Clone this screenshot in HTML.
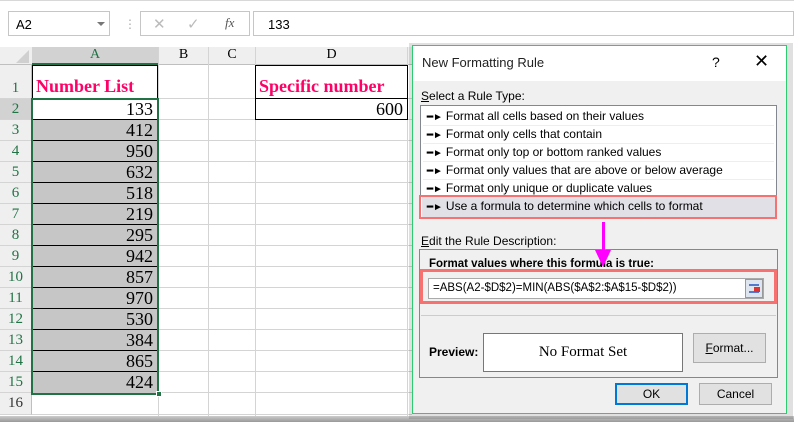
<!DOCTYPE html>
<html><head><meta charset="utf-8"><style>
*{box-sizing:border-box;margin:0;padding:0}
body{width:794px;height:422px;overflow:hidden;background:#fff;position:relative;font-family:"Liberation Serif",serif}
.a{position:absolute}
.ui{font-family:"Liberation Sans",sans-serif}
.rh{position:absolute;left:0;width:32px;background:#efefef;color:#217346;font-size:15px;text-align:center;border-bottom:1px solid #d4d4d4;border-right:1px solid #bfbfbf}
.hl{position:absolute;height:1px;background:#d4d4d4;left:32px;width:380px}
.vl{position:absolute;width:1px;background:#d4d4d4;top:65px;height:352px}
.cell{position:absolute;left:33px;width:124px;height:21px;background:#c6c6c6;border-bottom:1px solid #000;text-align:right;padding-right:4px;font-size:18px;line-height:20px}
.it{position:absolute;left:427px;font-size:12px;color:#000;font-family:"Liberation Sans",sans-serif}
.it b{font-size:10px;margin-right:3px}
.btn{position:absolute;background:#e1e1e1;border:1px solid #adadad;font-family:"Liberation Sans",sans-serif;font-size:12px;text-align:center}
</style></head><body>
<div class="a" style="left:0;top:0;width:794px;height:47px;background:#fff;border-top:1px solid #d8d8d8"></div>
<div class="a ui" style="left:8px;top:11px;width:102px;height:25px;border:1px solid #c6c6c6;font-size:13px;padding:5px 0 0 7px">A2<span class="a" style="left:88px;top:10px;border:4px solid transparent;border-top:4px solid #777"></span></div>
<div class="a" style="left:124px;top:17px;color:#aaa;font-size:12px">⋮</div>
<div class="a" style="left:140px;top:11px;width:110px;height:25px;border:1px solid #c6c6c6;color:#bbb;font-size:15px"><span class="a" style="left:12px;top:3px">✕</span><span class="a" style="left:46px;top:3px">✓</span><span class="a" style="left:84px;top:3px;color:#555;font-style:italic;font-size:13px">fx</span></div>
<div class="a ui" style="left:253px;top:11px;width:541px;height:25px;border:1px solid #c6c6c6;font-size:13px;padding:5px 0 0 14px">133</div>
<div class="a" style="left:0;top:47px;width:412px;height:18px;background:#efefef;border-bottom:1px solid #bfbfbf"></div>
<div class="a" style="left:16px;top:50px;border-left:13px solid transparent;border-bottom:13px solid #d0d0d0"></div>
<div class="a" style="left:32px;top:47px;width:126px;height:18px;background:#d2d2d2;border-bottom:2px solid #217346;text-align:center;font-size:14px;color:#217346">A</div>
<div class="a" style="left:158px;top:47px;width:50px;height:18px;text-align:center;font-size:14px;border-left:1px solid #d4d4d4">B</div>
<div class="a" style="left:208px;top:47px;width:47px;height:18px;text-align:center;font-size:14px;border-left:1px solid #d4d4d4">C</div>
<div class="a" style="left:255px;top:47px;width:153px;height:18px;text-align:center;font-size:14px;border-left:1px solid #d4d4d4;border-right:1px solid #d4d4d4">D</div>
<div class="rh" style="top:65px;height:34px;line-height:46px">1</div>
<div class="rh" style="top:99px;height:21px;line-height:21px;background:#d2d2d2">2</div>
<div class="rh" style="top:120px;height:21px;line-height:21px">3</div>
<div class="rh" style="top:141px;height:21px;line-height:21px">4</div>
<div class="rh" style="top:162px;height:21px;line-height:21px">5</div>
<div class="rh" style="top:183px;height:21px;line-height:21px">6</div>
<div class="rh" style="top:204px;height:21px;line-height:21px">7</div>
<div class="rh" style="top:225px;height:21px;line-height:21px">8</div>
<div class="rh" style="top:246px;height:21px;line-height:21px">9</div>
<div class="rh" style="top:267px;height:21px;line-height:21px">10</div>
<div class="rh" style="top:288px;height:21px;line-height:21px">11</div>
<div class="rh" style="top:309px;height:21px;line-height:21px">12</div>
<div class="rh" style="top:330px;height:21px;line-height:21px">13</div>
<div class="rh" style="top:351px;height:21px;line-height:21px">14</div>
<div class="rh" style="top:372px;height:21px;line-height:21px">15</div>
<div class="rh" style="top:393px;height:22px;line-height:21px;color:#333">16</div>
<div class="hl" style="top:98px"></div><div class="hl" style="top:119px"></div><div class="hl" style="top:140px"></div><div class="hl" style="top:161px"></div><div class="hl" style="top:182px"></div><div class="hl" style="top:203px"></div><div class="hl" style="top:224px"></div><div class="hl" style="top:245px"></div><div class="hl" style="top:266px"></div><div class="hl" style="top:287px"></div><div class="hl" style="top:308px"></div><div class="hl" style="top:329px"></div><div class="hl" style="top:350px"></div><div class="hl" style="top:371px"></div><div class="hl" style="top:392px"></div><div class="hl" style="top:414px"></div>
<div class="vl" style="left:158px"></div><div class="vl" style="left:208px"></div><div class="vl" style="left:255px"></div><div class="vl" style="left:407px"></div>
<div class="a" style="left:32px;top:65px;width:126px;height:34px;border:1px solid #000;border-bottom:none"></div>
<div class="a" style="left:36px;top:76px;color:#ff0066;font-weight:bold;font-size:18px">Number List</div>
<div class="a" style="left:255px;top:65px;width:153px;height:55px;border:1px solid #000"></div>
<div class="a" style="left:255px;top:98px;width:153px;height:1px;background:#000"></div>
<div class="a" style="left:259px;top:76px;color:#ff0066;font-weight:bold;font-size:18px">Specific number</div>
<div class="a" style="left:255px;top:99px;width:148px;text-align:right;font-size:18px;line-height:20px">600</div>
<div class="cell" style="top:99px;background:#fff">133</div>
<div class="cell" style="top:120px">412</div>
<div class="cell" style="top:141px">950</div>
<div class="cell" style="top:162px">632</div>
<div class="cell" style="top:183px">518</div>
<div class="cell" style="top:204px">219</div>
<div class="cell" style="top:225px">295</div>
<div class="cell" style="top:246px">942</div>
<div class="cell" style="top:267px">857</div>
<div class="cell" style="top:288px">970</div>
<div class="cell" style="top:309px">530</div>
<div class="cell" style="top:330px">384</div>
<div class="cell" style="top:351px">865</div>
<div class="cell" style="top:372px;border-bottom:none">424</div>
<div class="a" style="left:31px;top:98px;width:128px;height:297px;border:2px solid #217346"></div>
<div class="a" style="left:156px;top:391px;width:6px;height:6px;background:#217346;border:1px solid #fff"></div>
<div class="a" style="left:0;top:416px;width:794px;height:6px;background:linear-gradient(#ccc,#999)"></div>
<div class="a" style="left:409px;top:43px;width:384px;height:376px;background:rgba(0,0,0,.12)"></div>
<div class="a" style="left:412px;top:45px;width:375px;height:369px;background:#f0f0f0;border:1px solid #2ecc71"></div>
<div class="a" style="left:413px;top:46px;width:373px;height:35px;background:#fff"></div>
<div class="a ui" style="left:422px;top:55px;font-size:13px;color:#222">New Formatting Rule</div>
<div class="a ui" style="left:712px;top:54px;font-size:14px">?</div>
<div class="a ui" style="left:754px;top:51px;font-size:18px">✕</div>
<div class="a ui" style="left:421px;top:89px;font-size:12px"><u>S</u>elect a Rule Type:</div>
<div class="a" style="left:420px;top:105px;width:357px;height:114px;background:#fff;border:1px solid #828790"></div>
<div class="a" style="left:423px;top:125px;width:351px;height:1px;background:#eee"></div>
<div class="a" style="left:423px;top:143px;width:351px;height:1px;background:#eee"></div>
<div class="a" style="left:423px;top:161px;width:351px;height:1px;background:#eee"></div>
<div class="a" style="left:423px;top:179px;width:351px;height:1px;background:#eee"></div>
<div class="a" style="left:422px;top:197px;width:353px;height:20px;background:#e1e0e6"></div>
<div class="it" style="top:109px"><b>━►</b>Format all cells based on their values</div>
<div class="it" style="top:127px"><b>━►</b>Format only cells that contain</div>
<div class="it" style="top:145px"><b>━►</b>Format only top or bottom ranked values</div>
<div class="it" style="top:163px"><b>━►</b>Format only values that are above or below average</div>
<div class="it" style="top:181px"><b>━►</b>Format only unique or duplicate values</div>
<div class="it" style="top:199px"><b>━►</b>Use a formula to determine which cells to format</div>
<div class="a" style="left:419px;top:195px;width:358px;height:24px;border:2px solid #f87171"></div>
<div class="a ui" style="left:421px;top:234px;font-size:12px"><u>E</u>dit the Rule Description:</div>
<div class="a" style="left:419px;top:249px;width:359px;height:129px;border:1px solid #828790"></div>
<div class="a ui" style="left:429px;top:258px;font-size:11.5px;font-weight:bold">Format values where this formula is true:</div>
<div class="a" style="left:420px;top:269px;width:357px;height:35px;border:3px solid #f87171"></div>
<div class="a ui" style="left:428px;top:278px;width:336px;height:21px;background:#fff;border:1px solid #aaa;font-size:11.5px;padding:3px 0 0 4px">=ABS(A2-$D$2)=MIN(ABS($A$2:$A$15-$D$2))</div>
<div class="a" style="left:745px;top:279px;width:18px;height:19px;background:#dfe5ee;border:1px solid #999"><div class="a" style="left:3px;top:4px;width:10px;height:9px;border:1px solid #57c;border-width:2px 0"></div><div class="a" style="left:8px;top:7px;width:6px;height:5px;background:#d33"></div></div>
<div class="a" style="left:421px;top:315px;width:355px;height:1px;background:#ccc"></div>
<div class="a ui" style="left:429px;top:345px;font-size:12px;font-weight:bold">Preview:</div>
<div class="a" style="left:483px;top:333px;width:200px;height:39px;background:#fff;border:1px solid #777;text-align:center;font-size:15px;line-height:37px">No Format Set</div>
<div class="btn" style="left:693px;top:333px;width:73px;height:30px;line-height:28px"><u>F</u>ormat...</div>
<div class="btn" style="left:615px;top:383px;width:73px;height:22px;line-height:18px;border:2px solid #0078d7">OK</div>
<div class="btn" style="left:699px;top:383px;width:73px;height:22px;line-height:20px">Cancel</div>
<div class="a" style="left:602px;top:222px;width:3px;height:32px;background:#ff00ff"></div>
<div class="a" style="left:595px;top:250px;border-left:8px solid transparent;border-right:8px solid transparent;border-top:17px solid #ff00ff"></div>
</body></html>
